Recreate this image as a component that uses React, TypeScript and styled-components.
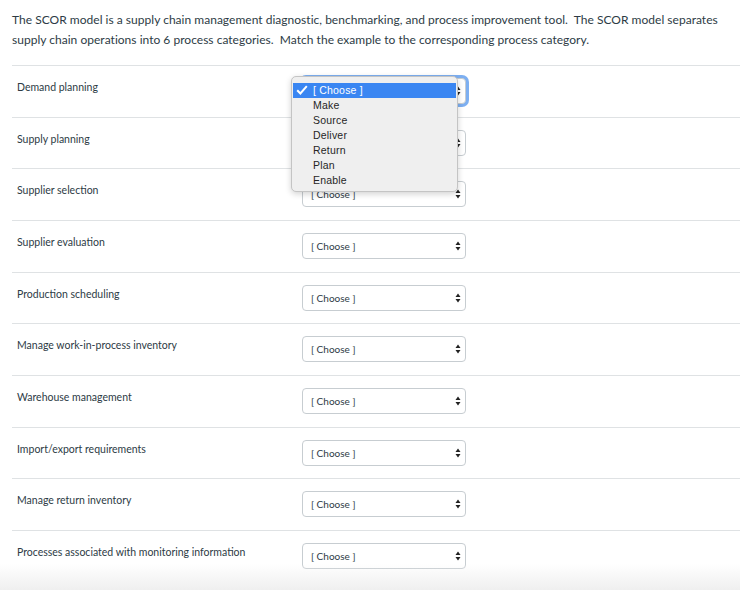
import { createGlobalStyle, styled } from 'styled-components';

const GlobalStyle = createGlobalStyle`
  html, body {
    margin: 0;
    padding: 0;
    background: #ffffff;
  }
  body {
    font-family: Lato, "Liberation Sans", sans-serif;
    color: #2d3b45;
    overflow: hidden;
  }
`;

const Page = styled.div`
  position: relative;
  width: 740px;
  height: 590px;
  overflow: hidden;
`;

const Intro = styled.p`
  margin: 0;
  padding: 10px 0 0 12px;
  font-size: 12px;
  letter-spacing: 0.02px;
  line-height: 20px;
  color: #2d3b45;
`;

const Answers = styled.div`
  margin: 15px 0 0 12px;
`;

const Row = styled.div`
  position: relative;
  display: grid;
  grid-template-columns: 290px 164px;
  align-items: start;
  height: 51.67px;
  border-top: 1px solid #dfe2e4;
  box-sizing: border-box;
`;

const Label = styled.div`
  padding: 15px 0 0 5px;
  font-size: 10.5px;
  line-height: 13px;
  color: #2d3b45;
`;

const SelectBox = styled.div<{ $focused?: boolean }>`
  margin-top: 12px;
  height: 26px;
  box-sizing: border-box;
  display: flex;
  align-items: center;
  justify-content: space-between;
  padding: 0 4px 0 8px;
  border: 1px solid #c7cdd1;
  border-radius: 4px;
  background: #fff;
  font-size: 10px;
  color: #2d3b45;
  box-shadow: ${(p) => (p.$focused ? '0 0 0 3px rgba(82, 148, 236, 0.75)' : 'none')};
`;

const Popup = styled.div`
  position: absolute;
  left: 279px;
  top: 10px;
  width: 167px;
  box-sizing: border-box;
  padding: 6px 1px 3px;
  background: #efefef;
  border: 1px solid #c4c4c4;
  border-radius: 5px;
  box-shadow: 0 2px 6px rgba(0, 0, 0, 0.18);
  font-family: "Liberation Sans", Arial, sans-serif;
  font-size: 10.5px;
  letter-spacing: 0.2px;
  z-index: 5;
`;

const Option = styled.div<{ $selected?: boolean }>`
  position: relative;
  height: 15px;
  line-height: 14px;
  padding-left: 20px;
  color: ${(p) => (p.$selected ? '#ffffff' : '#262626')};
  background: ${(p) => (p.$selected ? '#3a86f2' : 'transparent')};
`;

const Check = styled.svg`
  position: absolute;
  left: 3px;
  top: 2px;
`;

const BottomFade = styled.div`
  position: absolute;
  left: 0;
  right: 0;
  bottom: 0;
  height: 26px;
  background: linear-gradient(to bottom, rgba(240, 240, 240, 0), #efefef);
  pointer-events: none;
`;

const rows = [
  'Demand planning',
  'Supply planning',
  'Supplier selection',
  'Supplier evaluation',
  'Production scheduling',
  'Manage work-in-process inventory',
  'Warehouse management',
  'Import/export requirements',
  'Manage return inventory',
  'Processes associated with monitoring information',
];

const options = ['[ Choose ]', 'Make', 'Source', 'Deliver', 'Return', 'Plan', 'Enable'];

function Arrows() {
  return (
    <svg width="6" height="10" viewBox="0 0 6 10">
      <path d="M0.5 4 L3 0.5 L5.5 4 Z" fill="#222" />
      <path d="M0.5 6 L3 9.5 L5.5 6 Z" fill="#222" />
    </svg>
  );
}

function App() {
  return (
    <Page>
      <GlobalStyle />
      <Intro>
        The SCOR model is a supply chain management diagnostic, benchmarking, and process improvement tool.&nbsp; The SCOR model separates supply chain operations into 6 process categories.&nbsp; Match the example to the corresponding process category.
      </Intro>
      <Answers>
        {rows.map((label, i) => (
          <Row key={label}>
            <Label>{label}</Label>
            <SelectBox $focused={i === 0}>
              <span>[ Choose ]</span>
              <Arrows />
            </SelectBox>
            {i === 0 && (
              <Popup>
                {options.map((o, j) => (
                  <Option key={o} $selected={j === 0}>
                    {j === 0 && (
                      <Check width="12" height="10" viewBox="0 0 12 10">
                        <path d="M1.2 5.2 L4.4 8.5 L10.8 1.2" stroke="#fff" strokeWidth="2" fill="none" />
                      </Check>
                    )}
                    {o}
                  </Option>
                ))}
              </Popup>
            )}
          </Row>
        ))}
      </Answers>
      <BottomFade />
    </Page>
  );
}

export default App;
